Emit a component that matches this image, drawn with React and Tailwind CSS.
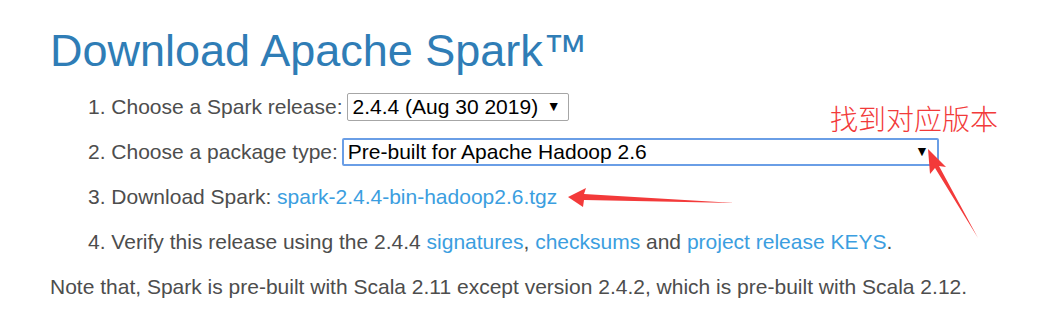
export default function App() {
  return (
    <div className="relative w-[1041px] h-[324px] bg-white overflow-hidden" style={{ fontFamily: '"Liberation Sans", Arial, sans-serif' }}>
      <h1 className="pl-[50px] pt-[27px] text-[45px] leading-[48px] text-[#2f7db6]">Download Apache Spark™</h1>

      <div className="mt-[9px] pl-[88px] text-[21px] text-[#4d4d4d]">
        <Row>
          <span>1. Choose a Spark release:</span>
          <Select className="ml-[5px] w-[222px] border border-[#a6a6a6]" label="2.4.4 (Aug 30 2019)" />
        </Row>
        <Row>
          <span>2. Choose a package type:</span>
          <Select className="ml-[4px] w-[597px] border-2 border-[#6a9ee6]" label="Pre-built for Apache Hadoop 2.6" />
        </Row>
        <Row>
          <span>3. Download Spark:&nbsp;</span>
          <a className="text-[#3b9ee0]">spark-2.4.4-bin-hadoop2.6.tgz</a>
        </Row>
        <Row>
          <span>
            4. Verify this release using the 2.4.4 <a className="text-[#3b9ee0]">signatures</a>,{" "}
            <a className="text-[#3b9ee0]">checksums</a> and <a className="text-[#3b9ee0]">project release KEYS</a>.
          </span>
        </Row>
      </div>

      <p className="pl-[50px] h-[45px] flex items-center text-[21px] text-[#4d4d4d]">
        Note that, Spark is pre-built with Scala 2.11 except version 2.4.2, which is pre-built with Scala 2.12.
      </p>

      {/* red annotation on top of the screenshot */}
      <div
        className="absolute left-[830px] top-[104px] text-[28px] leading-none text-[#f23a3a] font-light"
        style={{ fontFamily: '"Noto Sans CJK SC", sans-serif' }}
      >
        找到对应版本
      </div>
      <svg className="absolute left-0 top-0" width="1041" height="324" viewBox="0 0 1041 324">
        <path d="M568 197 L586 188 L584 194 L735 203 L584 200 L583 207 Z" fill="#f33a3a" />
        <path d="M928 149 L946 167 L939 166 L978 238 L935 168 L930 174 Z" fill="#f33a3a" />
      </svg>
    </div>
  );
}

function Row({ children }) {
  return <div className="h-[45px] flex items-center whitespace-nowrap">{children}</div>;
}

function Select({ label, className }) {
  return (
    <div className={`h-[28px] flex items-center justify-between pl-[4px] pr-[8px] rounded-[2px] text-[21px] text-black bg-white ${className}`}>
      <span>{label}</span>
      <span className="text-[14px]">▼</span>
    </div>
  );
}
